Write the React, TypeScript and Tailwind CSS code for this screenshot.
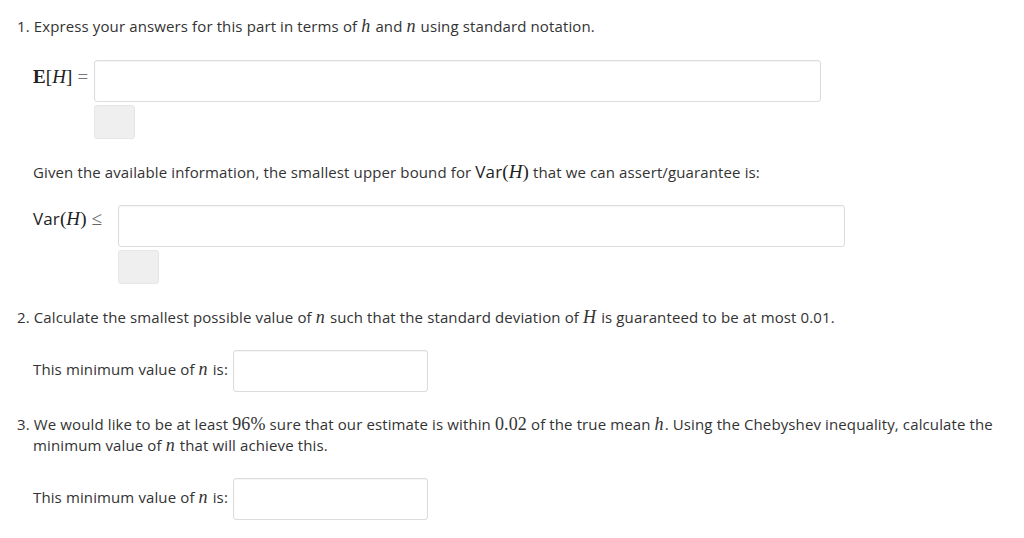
import React from "react";

const M = ({ children, className = "" }: { children: React.ReactNode; className?: string }) => (
  <span className={`font-['Liberation_Serif',serif] ${className}`}>{children}</span>
);
const I = ({ children }: { children: React.ReactNode }) => (
  <span className="font-['Liberation_Serif',serif] italic text-[18px] leading-[20px] pr-[1px]">{children}</span>
);

const Box = ({ w }: { w: string }) => (
  <div
    className={`${w} h-[42px] border border-[#dcdcdc] rounded-[3px] bg-white shadow-[inset_0_1px_1px_rgba(0,0,0,0.04)]`}
  />
);

const Btn = () => <div className="w-[41px] h-[34px] rounded-[3px] bg-[#efefef] border border-[#e6e6e6]" />;

export default function App() {
  return (
    <div className="w-[1024px] h-[538px] bg-white text-[#333] font-['Open_Sans',sans-serif] text-[15px] leading-[20px] tracking-[0.12px] pl-[17px] pt-[16px]">
      <p>
        1. Express your answers for this part in terms of <I>h</I> and <I>n</I> using standard notation.
      </p>
      <div className="pl-[16px] mt-[24px]">
        <div className="flex items-start">
          <div className="w-[61px] pt-[6px] text-[19px] text-[#222] whitespace-nowrap">
            <M>
              <b>E</b>[<i>H</i>] <span className="text-[#777]">=</span>
            </M>
          </div>
          <div className="flex flex-col gap-[3px]">
            <Box w="w-[727px]" />
            <Btn />
          </div>
        </div>
        <p className="mt-[23px]">
          Given the available information, the smallest upper bound for{" "}
          <span className="text-[17px] text-[#222]">
            Var<M className="text-[19px]">(<i>H</i>)</M>
          </span>{" "}
          that we can assert/guarantee is:
        </p>
        <div className="flex items-start mt-[23px]">
          <div className="w-[85px] pt-[4px] text-[17px] text-[#222] whitespace-nowrap">
            Var<M className="text-[19px]">(<i>H</i>) <span className="text-[#666]">≤</span></M>
          </div>
          <div className="flex flex-col gap-[3px]">
            <Box w="w-[727px]" />
            <Btn />
          </div>
        </div>
      </div>
      <p className="mt-[23px]">
        2. Calculate the smallest possible value of <I>n</I> such that the standard deviation of{" "}
        <I>H</I> is guaranteed to be at most 0.01.
      </p>
      <div className="pl-[16px] mt-[23px] flex items-start">
        <span className="w-[200px] pt-[9px] whitespace-nowrap">
          This minimum value of <I>n</I> is:
        </span>
        <Box w="w-[195px]" />
      </div>
      <p className="mt-[22px] leading-[21px]">
        3. We would like to be at least <M className="text-[18px]">96%</M> sure that our estimate is within{" "}
        <M className="text-[18px]">0.02</M> of the true mean <I>h</I>. Using the Chebyshev inequality, calculate the
        <br />
        <span className="pl-[16px]">
          minimum value of <I>n</I> that will achieve this.
        </span>
      </p>
      <div className="pl-[16px] mt-[22px] flex items-start">
        <span className="w-[200px] pt-[9px] whitespace-nowrap">
          This minimum value of <I>n</I> is:
        </span>
        <Box w="w-[195px]" />
      </div>
    </div>
  );
}
